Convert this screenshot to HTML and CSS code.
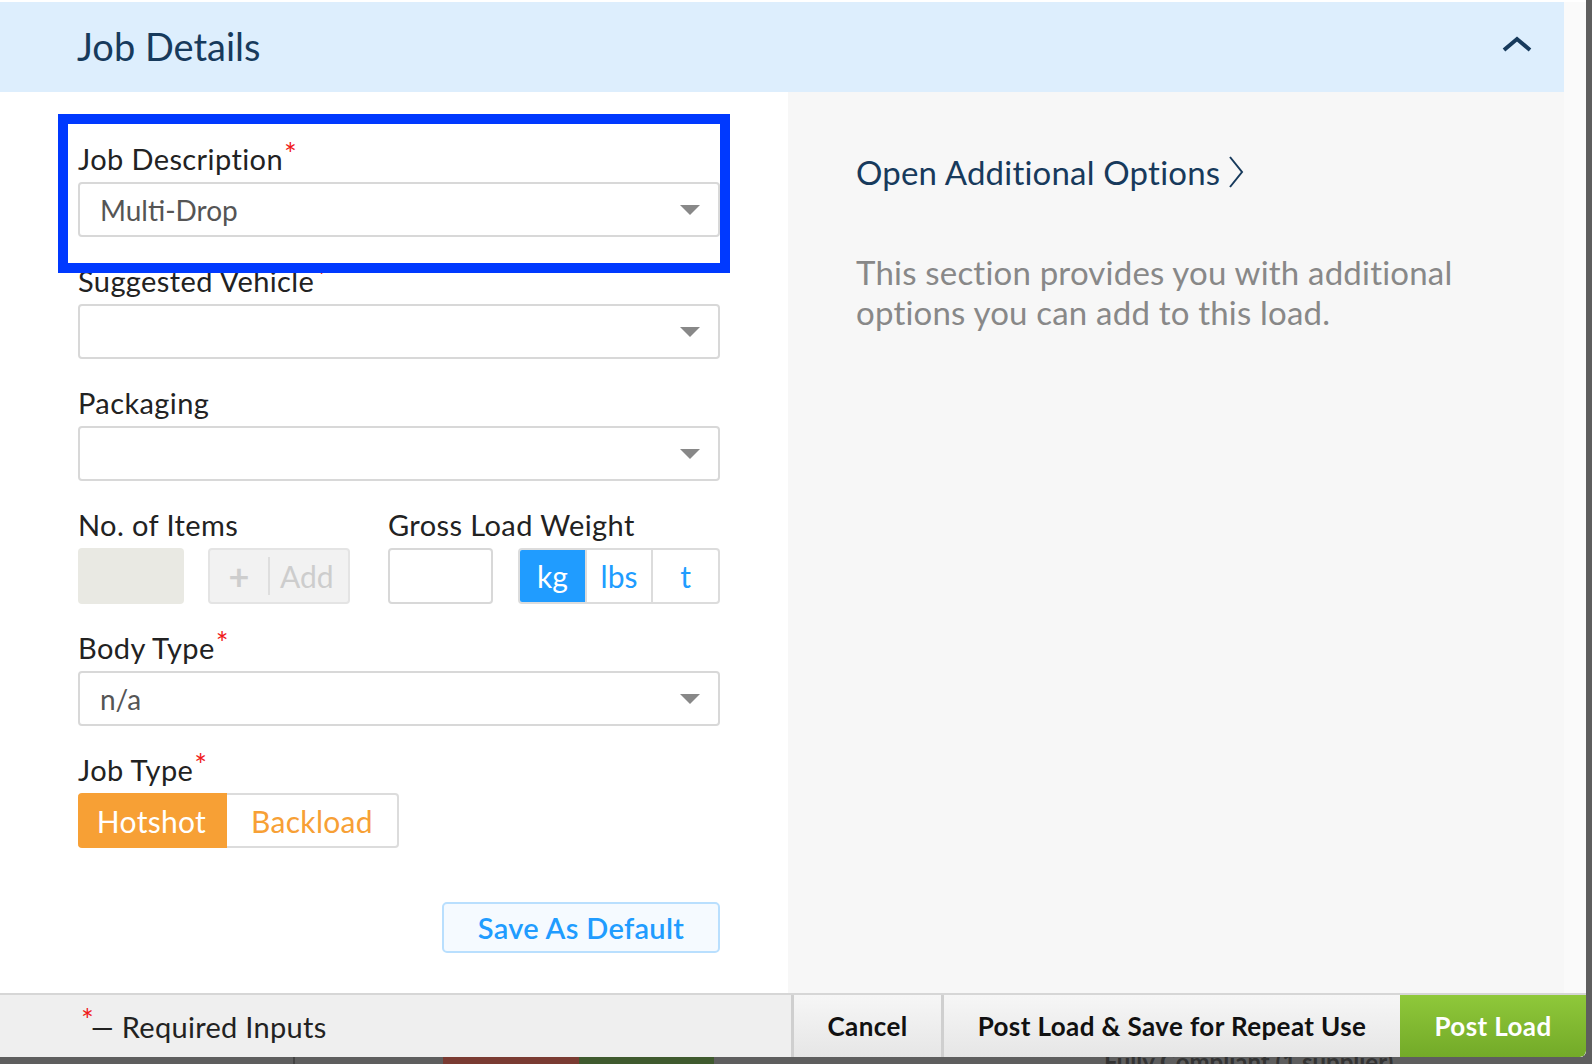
FILE: index.html
```html
<!DOCTYPE html>
<html lang="en">
<head>
  <meta charset="UTF-8" />
  <title>Post Load - Job Details</title>
  <link rel="stylesheet" href="styles.css">
</head>
<body>
  <div class="modal">
    <div class="modal-body">
      <div class="content">
        <div class="section-header">
          <div class="section-title">Job Details</div>
          <svg class="collapse-icon" width="30" height="16" viewBox="0 0 30 16">
            <path d="M2 14L15 3l13 11" fill="none" stroke="#173a5c" stroke-width="4" stroke-linejoin="miter"/>
          </svg>
        </div>

        <div class="panels">
          <div class="form-panel">
            <div class="highlight"></div>

            <div class="field">
              <label>Job Description<span class="req">*</span></label>
              <div class="select">
                <span class="select-value">Multi-Drop</span>
                <svg width="20" height="10" viewBox="0 0 20 10"><path d="M0 0h20L10 10z" fill="#888"/></svg>
              </div>
            </div>

            <div class="field">
              <label>Suggested Vehicle<span class="req">*</span></label>
              <div class="select">
                <span class="select-value"></span>
                <svg width="20" height="10" viewBox="0 0 20 10"><path d="M0 0h20L10 10z" fill="#888"/></svg>
              </div>
            </div>

            <div class="field">
              <label>Packaging</label>
              <div class="select">
                <span class="select-value"></span>
                <svg width="20" height="10" viewBox="0 0 20 10"><path d="M0 0h20L10 10z" fill="#888"/></svg>
              </div>
            </div>

            <div class="field field-row">
              <div class="half">
                <label>No. of Items</label>
                <div class="inline-inputs">
                  <div class="items-box"></div>
                  <div class="add-btn">
                    <span class="add-plus">+</span>
                    <span class="add-text">Add</span>
                  </div>
                </div>
              </div>
              <div class="half">
                <label>Gross Load Weight</label>
                <div class="inline-inputs">
                  <div class="weight-box"></div>
                  <div class="unit-toggle">
                    <span class="unit active">kg</span>
                    <span class="unit">lbs</span>
                    <span class="unit">t</span>
                  </div>
                </div>
              </div>
            </div>

            <div class="field">
              <label>Body Type<span class="req">*</span></label>
              <div class="select">
                <span class="select-value">n/a</span>
                <svg width="20" height="10" viewBox="0 0 20 10"><path d="M0 0h20L10 10z" fill="#888"/></svg>
              </div>
            </div>

            <div class="field">
              <label>Job Type<span class="req">*</span></label>
              <div class="job-toggle">
                <span class="job-opt active">Hotshot</span>
                <span class="job-opt">Backload</span>
              </div>
            </div>

            <div class="save-row">
              <button class="save-default">Save As Default</button>
            </div>
          </div>

          <div class="options-panel">
            <a class="options-link">Open Additional Options
              <svg width="16" height="34" viewBox="0 0 16 34"><path d="M2 2l12 15L2 32" fill="none" stroke="#173a5c" stroke-width="2"/></svg>
            </a>
            <p class="options-text">This section provides you with additional options you can add to this load.</p>
          </div>
        </div>
      </div>
      <div class="scroll-track"></div>
    </div>

    <div class="modal-footer">
      <div class="required-note"><span class="req">*</span>— Required Inputs</div>
      <button class="footer-btn cancel">Cancel</button>
      <button class="footer-btn repeat">Post Load &amp; Save for Repeat Use</button>
      <button class="footer-btn post">Post Load</button>
    </div>
  </div>

  <div class="backdrop-strip">
    <span class="strip-line"></span>
    <span class="strip-red"></span>
    <span class="strip-green"></span>
    <span class="strip-text">Fully Compliant (1 supplier)</span>
  </div>
</body>
</html>
```

FILE: styles.css
```css
body {
  margin: 0;
  background: #5e5e5e;
  font-family: Lato, "Open Sans", sans-serif;
  color: #222;
  overflow: hidden;
}
.modal {
  width: 1586px;
  height: 1057px;
  background: #fff;
  padding-top: 2px;
  box-sizing: border-box;
  display: flex;
  flex-direction: column;
  border-bottom-right-radius: 6px;
  overflow: hidden;
}
.modal-body {
  flex: 1;
  display: flex;
  min-height: 0;
}
.content {
  width: 1564px;
  display: flex;
  flex-direction: column;
}
.scroll-track {
  flex: 1;
  background: #fafafa;
}

/* header band */
.section-header {
  height: 90px;
  background: #ddeefd;
  display: flex;
  align-items: center;
  justify-content: space-between;
  padding: 0 32px 0 77px;
}
.section-title {
  font-size: 38px;
  color: #173a5c;
  padding-bottom: 2px;
}
.collapse-icon {
  margin-top: -6px;
}

.panels {
  flex: 1;
  display: flex;
}

/* left form */
.form-panel {
  position: relative;
  width: 788px;
  box-sizing: border-box;
  padding: 44px 68px 0 78px;
}
.highlight {
  position: absolute;
  left: 58px;
  top: 22px;
  width: 672px;
  height: 159px;
  border: 10px solid #0039ff;
  box-sizing: border-box;
  z-index: 2;
}
.field {
  margin-bottom: 21px;
}
label {
  display: block;
  font-size: 29px;
  letter-spacing: 0.4px;
  line-height: 40px;
  height: 40px;
  padding-top: 3px;
  margin-bottom: 3px;
  color: #222;
}
.req {
  color: #f01a1a;
  font-size: 30px;
  letter-spacing: 0;
  vertical-align: top;
  line-height: 28px;
  margin-left: 1px;
}
.select {
  height: 55px;
  box-sizing: border-box;
  border: 2px solid #d8d8d8;
  border-radius: 4px;
  display: flex;
  align-items: center;
  justify-content: space-between;
  padding: 0 18px 0 20px;
  background: #fff;
}
.select-value {
  font-size: 28px;
  color: #555;
}

.field-row {
  display: flex;
}
.half {
  width: 310px;
}
.half + .half {
  width: 332px;
}
.inline-inputs {
  display: flex;
  height: 56px;
}
.items-box {
  width: 106px;
  background: #e9e9e3;
  border-radius: 4px;
}
.add-btn {
  margin-left: 24px;
  width: 142px;
  box-sizing: border-box;
  border: 2px solid #e4e4e4;
  border-radius: 4px;
  background: #f2f2f2;
  display: flex;
  align-items: center;
  color: #cdcdcd;
}
.add-plus {
  width: 58px;
  text-align: center;
  font-size: 36px;
  font-weight: bold;
  border-right: 2px solid #dedede;
  line-height: 38px;
}
.add-text {
  padding-left: 10px;
  font-size: 30px;
}
.weight-box {
  width: 105px;
  box-sizing: border-box;
  border: 2px solid #d8d8d8;
  border-radius: 4px;
}
.unit-toggle {
  margin-left: 25px;
  flex: 1;
  display: flex;
  border: 2px solid #dcdcdc;
  border-radius: 4px;
  overflow: hidden;
}
.unit {
  flex: 1;
  display: flex;
  align-items: center;
  justify-content: center;
  font-size: 30px;
  color: #209cff;
}
.unit + .unit {
  border-left: 2px solid #dcdcdc;
}
.unit.active {
  background: #209cff;
  color: #fff;
}

.job-toggle {
  display: flex;
  width: 321px;
  height: 55px;
}
.job-opt {
  display: flex;
  align-items: center;
  justify-content: center;
  font-size: 30px;
  letter-spacing: 0.3px;
  color: #f7a035;
  width: 172px;
  box-sizing: border-box;
  border: 2px solid #dcdcdc;
  border-left: none;
  border-radius: 0 4px 4px 0;
}
.job-opt.active {
  width: 149px;
  background: #f7a035;
  border-color: #f7a035;
  color: #fff;
  border-radius: 4px 0 0 4px;
}

.save-row {
  display: flex;
  justify-content: flex-end;
  margin-top: 54px;
}
.save-default {
  width: 278px;
  height: 51px;
  background: #f5faff;
  border: 2px solid #b9dffe;
  border-radius: 5px;
  color: #209cff;
  font-family: inherit;
  font-size: 29px;
  letter-spacing: 0.3px;
  font-weight: 600;
}

/* right panel */
.options-panel {
  flex: 1;
  background: #f7f7f7;
  padding: 60px 80px 0 68px;
}
.options-link {
  display: flex;
  align-items: center;
  gap: 8px;
  font-size: 33px;
  letter-spacing: 0.2px;
  line-height: 40px;
  color: #173a5c;
}
.options-text {
  margin: 60px 0 0;
  font-size: 33px;
  letter-spacing: 0.2px;
  line-height: 40px;
  color: #888;
}

/* footer */
.modal-footer {
  height: 62px;
  border-top: 2px solid #d6d6d6;
  background: #efefef;
  display: flex;
  align-items: stretch;
}
.required-note {
  flex: 1;
  display: flex;
  align-items: center;
  padding-left: 80px;
  font-size: 29px;
  letter-spacing: 0.3px;
  color: #222;
}
.required-note .req {
  align-self: flex-start;
  margin-top: 10px;
  margin-right: -3px;
}
.footer-btn {
  border: none;
  border-left: 3px solid #cfcfcf;
  background: linear-gradient(#f6f6f6, #e6e6e6);
  font-family: inherit;
  font-size: 26px;
  letter-spacing: 0.4px;
  font-weight: bold;
  color: #111;
  padding: 0;
}
.footer-btn.cancel {
  width: 150px;
}
.footer-btn.repeat {
  width: 459px;
}
.footer-btn.post {
  width: 186px;
  border-left: none;
  background: linear-gradient(#8fc83a, #73aa28);
  color: #fff;
  border-bottom-right-radius: 6px;
}

/* page behind the modal */
.backdrop-strip {
  height: 7px;
  display: flex;
  background: #5e5e5e;
  overflow: hidden;
}
.strip-line {
  width: 2px;
  margin-left: 293px;
  background: #444;
}
.strip-red {
  width: 136px;
  margin-left: 148px;
  background: #7a3b32;
}
.strip-green {
  width: 135px;
  background: #3f5a2e;
}
.strip-text {
  margin-left: 390px;
  font-size: 24px;
  font-weight: bold;
  color: #333;
  line-height: 10px;
}
```
